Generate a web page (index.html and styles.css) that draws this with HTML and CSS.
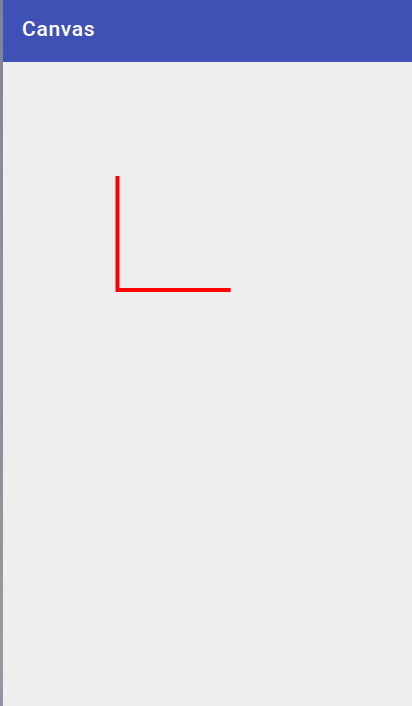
FILE: index.html
```html
<!DOCTYPE html>
<html>
<head>
<meta charset="utf-8">
<link rel="stylesheet" href="styles.css">
</head>
<body>
<div class="screen">
  <div class="edge"></div>
  <div class="app">
    <header class="appbar"><h1 class="title">Canvas</h1></header>
    <main class="content">
      <svg class="drawing" width="409" height="644" viewBox="0 0 409 644" xmlns="http://www.w3.org/2000/svg">
        <path d="M114.5 114 V228 H227.7" fill="none" stroke="#ff0000" stroke-width="4" stroke-linejoin="miter"/>
      </svg>
    </main>
  </div>
</div>
</body>
</html>
```
FILE: styles.css
```css
html, body {
  margin: 0;
  padding: 0;
  background: #eeeeee;
}
.screen {
  display: flex;
  width: 412px;
  height: 706px;
  overflow: hidden;
}
.edge {
  width: 3px;
  flex: none;
  background: linear-gradient(#7d8391, #8c919c 40%, #8a8f9b 60%, #9a9a9a 90%, #8e96a6);
}
.app {
  flex: 1;
  display: flex;
  flex-direction: column;
  background: #eeeeee;
}
.appbar {
  height: 62px;
  flex: none;
  background: #3f51b5;
  padding: 17px 0 0 19px;
  box-sizing: border-box;
}
.title {
  margin: 0;
  font-family: Roboto, "Noto Sans", sans-serif;
  font-weight: 500;
  font-size: 21px;
  letter-spacing: 0.7px;
  line-height: 24px;
  color: #ffffff;
}
.content {
  flex: 1;
}
.drawing {
  display: block;
}
```
